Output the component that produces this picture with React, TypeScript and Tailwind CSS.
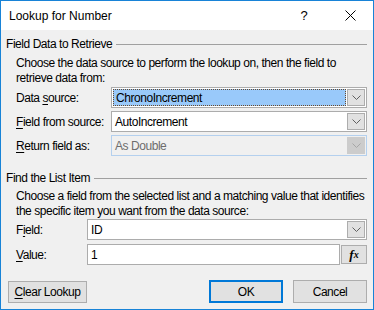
import React from 'react';

// Access "Lookup for Number" dialog

function Chevron({ color = '#606060' }: { color?: string }) {
  return (
    <svg width="9" height="5" viewBox="0 0 9 5">
      <path d="M0.5 0.5 L4.5 4.5 L8.5 0.5" stroke={color} strokeWidth="1" fill="none" />
    </svg>
  );
}

type ComboState = 'focused' | 'normal' | 'disabled';

function Combo({ value, state = 'normal' }: { value: string; state?: ComboState }) {
  const disabled = state === 'disabled';
  return (
    <div
      className={`flex-1 h-[21px] flex p-[1px] border ${
        disabled ? 'border-[#b4d0ee] bg-[#f0f0f0]' : 'border-[#acacac] bg-white'
      }`}
    >
      <div
        className={`flex-1 flex items-center pl-[2px] mr-[1px] ${
          state === 'focused' ? 'bg-[#99c9fa] border border-dotted border-[#6b4a2a]' : ''
        } ${disabled ? 'text-[#6d6d6d]' : 'text-black'}`}
      >
        {value}
      </div>
      <div
        className={`w-[18px] flex items-center justify-center border ${
          disabled ? 'bg-[#cccccc] border-[#cccccc]' : 'bg-[#e1e1e1] border-[#adadad]'
        }`}
      >
        <Chevron color={disabled ? '#a6a6a6' : '#606060'} />
      </div>
    </div>
  );
}

function GroupHeader({ title }: { title: string }) {
  return (
    <div className="flex items-center pl-[5px] pr-[6px]">
      <span className="leading-[15px]">{title}</span>
      <div className="flex-1 h-px bg-[#a0a0a0] ml-[4px]" />
    </div>
  );
}

function Row({ label, labelWidth, children }: { label: React.ReactNode; labelWidth: string; children: React.ReactNode }) {
  return (
    <div className="flex items-center">
      <div className={`${labelWidth} shrink-0 whitespace-nowrap`}>{label}</div>
      {children}
    </div>
  );
}

const U = ({ children }: { children: React.ReactNode }) => (
  <span className="underline underline-offset-2">{children}</span>
);

export default function App() {
  return (
    <div className="w-[374px] h-[310px] border border-[#1883d7] bg-[#f0f0f0] flex flex-col text-[12px] text-black [font-family:'Liberation_Sans',Arial,sans-serif] tracking-[-0.45px] overflow-hidden">
      {/* Title bar */}
      <div className="h-[29px] bg-white flex items-center shrink-0 tracking-normal">
        <div className="flex-1 pl-[8px] text-[12px]">Lookup for Number</div>
        <div className="w-[46px] h-full flex items-center justify-center text-[13px]">?</div>
        <div className="w-[46px] h-full flex items-center justify-center">
          <svg width="11" height="11" viewBox="0 0 11 11">
            <path d="M0.5 0.5 L10.5 10.5 M10.5 0.5 L0.5 10.5" stroke="#000" strokeWidth="1" fill="none" />
          </svg>
        </div>
      </div>

      {/* Field Data to Retrieve */}
      <div className="mt-[7px]">
        <GroupHeader title="Field Data to Retrieve" />
      </div>
      <div className="pl-[15px] pr-[6px] mt-[4px]">
        <div className="leading-[15px] whitespace-nowrap">
          <div>Choose the data source to perform the lookup on, then the field to</div>
          <div>retrieve data from:</div>
        </div>
        <div className="mt-[1px] flex flex-col gap-[3px]">
          <Row labelWidth="w-[95px]" label={<>Data <U>s</U>ource:</>}>
            <Combo value="ChronoIncrement" state="focused" />
          </Row>
          <Row labelWidth="w-[95px]" label={<><U>F</U>ield from source:</>}>
            <Combo value="AutoIncrement" />
          </Row>
          <Row labelWidth="w-[95px]" label={<><U>R</U>eturn field as:</>}>
            <Combo value="As Double" state="disabled" />
          </Row>
        </div>
      </div>

      {/* Find the List Item */}
      <div className="mt-[15px]">
        <GroupHeader title="Find the List Item" />
      </div>
      <div className="pl-[15px] pr-[6px] mt-[3px]">
        <div className="leading-[15px] whitespace-nowrap">
          <div>Choose a field from the selected list and a matching value that identifies</div>
          <div>the specific item you want from the data source:</div>
        </div>
        <div className="flex flex-col gap-[4px]">
          <Row labelWidth="w-[71px]" label={<>F<U>i</U>eld:</>}>
            <Combo value="ID" />
          </Row>
          <Row labelWidth="w-[71px]" label={<><U>V</U>alue:</>}>
            <div className="flex-1 h-[21px] border border-[#acacac] bg-white flex items-center pl-[3px]">1</div>
            <div className="ml-[1px] w-[26px] h-[19px] border border-[#adadad] bg-[#e1e1e1] flex items-center justify-center [font-family:'Liberation_Serif',serif] italic font-bold text-[13px] leading-none tracking-normal">
              f<span className="text-[10px]">x</span>
            </div>
          </Row>
        </div>
      </div>

      {/* Buttons */}
      <div className="mt-[15px] flex items-center pl-[7px] pr-[6px]">
        <button className="w-[79px] h-[22px] border border-[#adadad] bg-[#e1e1e1] flex items-center justify-center">
          <span><U>C</U>lear Lookup</span>
        </button>
        <div className="flex-1" />
        <button className="w-[74px] h-[23px] border-2 border-[#0078d7] bg-[#e1e1e1] flex items-center justify-center">
          OK
        </button>
        <button className="ml-[10px] w-[74px] h-[23px] border border-[#adadad] bg-[#e1e1e1] flex items-center justify-center">
          Cancel
        </button>
      </div>
    </div>
  );
}
